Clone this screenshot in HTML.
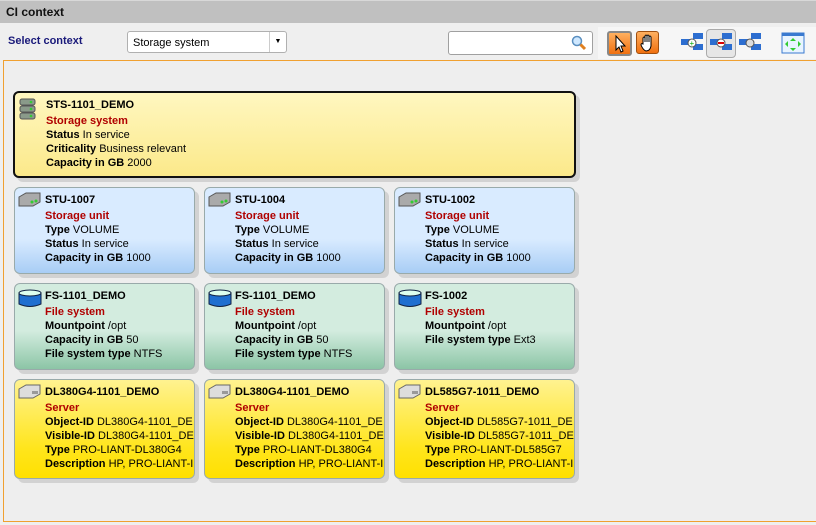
<!DOCTYPE html>
<html><head><style>
*{box-sizing:border-box;margin:0;padding:0}
body{width:816px;height:525px;background:#efefef;font-family:"Liberation Sans",Arial,sans-serif;font-size:11px;position:relative;overflow:hidden}
.title{position:absolute;left:0;top:0;width:816px;height:23px;background:#c0c0c0;border-top:1px solid #d8d8d8;font-weight:bold;font-size:12px;padding:4px 0 0 6px;color:#111}
.lbl{position:absolute;left:8px;top:35px;color:#1a1a7a;font-weight:bold;font-size:11px}
.sel{position:absolute;left:127px;top:31px;width:160px;height:22px;background:#fff;border:1px solid #b0b0b0;border-radius:3px;padding:5px 0 0 5px;font-size:11px}
.sel .ar{position:absolute;right:0;top:0;width:17px;height:20px;border-left:1px solid #ccc;font-size:7px;text-align:center;padding-top:6px}
.srch{position:absolute;left:448px;top:31px;width:145px;height:24px;background:#fff;border:1px solid #a0a0a0;border-radius:3px}
.tb{position:absolute;left:598px;top:27px;width:218px;height:32px;background:#f6f6f6}
.content{position:absolute;left:3px;top:60px;width:830px;height:462px;border:1px solid #f0a030;background:#eeeeee}
.card{position:absolute;border:1px solid #9aa;border-radius:6px;box-shadow:4px 4px 0 #d2d2d2;padding:5px 0 0 30px;line-height:14px;color:#000}
.card b{font-weight:bold}
.card .t{font-weight:bold;margin-bottom:2px}
.card .c{color:#b00000;font-weight:bold}
.card .ic{position:absolute;left:3px;top:4px}
.y1{background:linear-gradient(#fff7c0,#fbe98a);border:2px solid #111}
.bl{background:linear-gradient(#d9ebff 60%,#a8cdf5)}
.gr{background:linear-gradient(#d3ecdf 55%,#8cc5a6)}
.yl{background:linear-gradient(#fff290 0%,#ffe51c 70%,#ffe000)}
.w{white-space:nowrap;overflow:hidden}
</style></head><body>
<div class="title">CI context</div>
<div class="lbl">Select context</div>
<div class="sel">Storage system<div class="ar">▼</div></div>
<div class="srch"><svg style="position:absolute;right:5px;top:3px" width="16" height="16"><circle cx="6" cy="6" r="4.5" fill="#cfe8ff" stroke="#5a8fc0" stroke-width="1.5"/><line x1="9.5" y1="9.5" x2="14" y2="14" stroke="#e08020" stroke-width="3"/></svg></div>
<div class="tb">
<div style="position:absolute;left:9px;top:4px;width:25px;height:25px;border:2px solid #888;border-radius:3px;background:linear-gradient(#ffb060,#f07010)"><svg width="21" height="21"><path d="M7 3 L7 17 L10 14 L12 19 L14 18 L12 13 L16 13 Z" fill="#fff" stroke="#000"/></svg></div>
<div style="position:absolute;left:38px;top:4px;width:23px;height:23px;border:1px solid #a05010;border-radius:3px;background:linear-gradient(#ffb060,#f07010)"><svg width="21" height="21"><path d="M6 11 V6 Q7 4 8 6 V10 V4 Q9 2 10 4 V10 V4 Q11 2 12 4 V10 V5 Q13 3 14 5 V14 Q13 19 9 19 Q6 18 4 13 Q4 11 6 12Z" fill="#fff" stroke="#000"/></svg></div>
<svg style="position:absolute;left:83px;top:5px" width="24" height="20"><rect x="0" y="7" width="9" height="6" fill="#2d6ed0"/><rect x="12" y="1" width="10" height="6" fill="#2d6ed0"/><rect x="12" y="12" width="10" height="6" fill="#2d6ed0"/><circle cx="11" cy="11" r="4" fill="#fff" stroke="#555"/><text x="8.5" y="14" font-size="8" fill="#0a0">+</text></svg>
<div style="position:absolute;left:108px;top:2px;width:30px;height:29px;border:1px solid #aaa;border-radius:4px;background:#e6e6e6"></div>
<svg style="position:absolute;left:112px;top:5px" width="24" height="20"><rect x="0" y="7" width="9" height="6" fill="#2d6ed0"/><rect x="12" y="1" width="10" height="6" fill="#2d6ed0"/><rect x="12" y="12" width="10" height="6" fill="#2d6ed0"/><circle cx="11" cy="11" r="4" fill="#fff" stroke="#555"/><rect x="8" y="10" width="6" height="2" fill="#d00"/></svg>
<svg style="position:absolute;left:141px;top:5px" width="24" height="20"><rect x="0" y="7" width="9" height="6" fill="#2d6ed0"/><rect x="12" y="1" width="10" height="6" fill="#2d6ed0"/><rect x="12" y="12" width="10" height="6" fill="#2d6ed0"/><circle cx="11" cy="11" r="4" fill="#ddd" stroke="#555"/></svg>
<svg style="position:absolute;left:183px;top:5px" width="24" height="22"><rect x="1" y="1" width="22" height="20" fill="#e8f4ff" stroke="#3a7ad0"/><rect x="1" y="1" width="22" height="3" fill="#3a7ad0"/><path d="M12 6 L9 9 H15Z M12 19 L9 16 H15Z M4 12 L7 9 V15Z M20 12 L17 9 V15Z" fill="#3c3"/></svg>
</div>
<div class="content"></div>

<div class="card y1" style="left:13px;top:91px;width:563px;height:87px;padding:5px 0 0 31px">
<svg class="ic" width="20" height="24"><g fill="#8a9a8a" stroke="#555"><rect x="2" y="2" width="15" height="6" rx="2"/><rect x="2" y="9" width="15" height="6" rx="2"/><rect x="2" y="16" width="15" height="6" rx="2"/></g><g fill="#3c3"><circle cx="13" cy="5" r="1.3"/><circle cx="13" cy="12" r="1.3"/><circle cx="13" cy="19" r="1.3"/></g></svg>
<div class="t">STS-1101_DEMO</div><div class="c">Storage system</div><div><b>Status</b> In service</div><div><b>Criticality</b> Business relevant</div><div><b>Capacity in GB</b> 2000</div></div>

<!-- storage units -->
<div class="card bl" style="left:14px;top:187px;width:181px;height:87px"><svg class="ic" width="24" height="16"><path d="M1 5 L8 1 H22 V10 L15 14 H1Z" fill="#aaa" stroke="#555"/><circle cx="14" cy="10" r="1.5" fill="#3c3"/><circle cx="18" cy="9" r="1.5" fill="#3c3"/></svg><div class="t">STU-1007</div><div class="c">Storage unit</div><div><b>Type</b> VOLUME</div><div><b>Status</b> In service</div><div><b>Capacity in GB</b> 1000</div></div>
<div class="card bl" style="left:204px;top:187px;width:181px;height:87px"><svg class="ic" width="24" height="16"><path d="M1 5 L8 1 H22 V10 L15 14 H1Z" fill="#aaa" stroke="#555"/><circle cx="14" cy="10" r="1.5" fill="#3c3"/><circle cx="18" cy="9" r="1.5" fill="#3c3"/></svg><div class="t">STU-1004</div><div class="c">Storage unit</div><div><b>Type</b> VOLUME</div><div><b>Status</b> In service</div><div><b>Capacity in GB</b> 1000</div></div>
<div class="card bl" style="left:394px;top:187px;width:181px;height:87px"><svg class="ic" width="24" height="16"><path d="M1 5 L8 1 H22 V10 L15 14 H1Z" fill="#aaa" stroke="#555"/><circle cx="14" cy="10" r="1.5" fill="#3c3"/><circle cx="18" cy="9" r="1.5" fill="#3c3"/></svg><div class="t">STU-1002</div><div class="c">Storage unit</div><div><b>Type</b> VOLUME</div><div><b>Status</b> In service</div><div><b>Capacity in GB</b> 1000</div></div>

<!-- file systems -->
<div class="card gr" style="left:14px;top:283px;width:181px;height:87px"><svg class="ic" width="24" height="20"><path d="M1 5 Q12 9 23 5 V16 Q12 21 1 16Z" fill="#1e6fd0" stroke="#124"/><ellipse cx="12" cy="5" rx="11" ry="3" fill="#dfe" stroke="#124"/></svg><div class="t">FS-1101_DEMO</div><div class="c">File system</div><div><b>Mountpoint</b> /opt</div><div><b>Capacity in GB</b> 50</div><div><b>File system type</b> NTFS</div></div>
<div class="card gr" style="left:204px;top:283px;width:181px;height:87px"><svg class="ic" width="24" height="20"><path d="M1 5 Q12 9 23 5 V16 Q12 21 1 16Z" fill="#1e6fd0" stroke="#124"/><ellipse cx="12" cy="5" rx="11" ry="3" fill="#dfe" stroke="#124"/></svg><div class="t">FS-1101_DEMO</div><div class="c">File system</div><div><b>Mountpoint</b> /opt</div><div><b>Capacity in GB</b> 50</div><div><b>File system type</b> NTFS</div></div>
<div class="card gr" style="left:394px;top:283px;width:181px;height:87px"><svg class="ic" width="24" height="20"><path d="M1 5 Q12 9 23 5 V16 Q12 21 1 16Z" fill="#1e6fd0" stroke="#124"/><ellipse cx="12" cy="5" rx="11" ry="3" fill="#dfe" stroke="#124"/></svg><div class="t">FS-1002</div><div class="c">File system</div><div><b>Mountpoint</b> /opt</div><div><b>File system type</b> Ext3</div></div>

<!-- servers -->
<div class="card yl w" style="left:14px;top:379px;width:181px;height:100px"><svg class="ic" width="24" height="16"><path d="M1 5 L8 1 H22 V10 L15 14 H1Z" fill="#ddd" stroke="#666"/><rect x="14" y="7" width="6" height="3" fill="#999"/></svg><div class="t">DL380G4-1101_DEMO</div><div class="c">Server</div><div><b>Object-ID</b> DL380G4-1101_DE</div><div><b>Visible-ID</b> DL380G4-1101_DE</div><div><b>Type</b> PRO-LIANT-DL380G4</div><div><b>Description</b> HP, PRO-LIANT-I</div></div>
<div class="card yl w" style="left:204px;top:379px;width:181px;height:100px"><svg class="ic" width="24" height="16"><path d="M1 5 L8 1 H22 V10 L15 14 H1Z" fill="#ddd" stroke="#666"/><rect x="14" y="7" width="6" height="3" fill="#999"/></svg><div class="t">DL380G4-1101_DEMO</div><div class="c">Server</div><div><b>Object-ID</b> DL380G4-1101_DE</div><div><b>Visible-ID</b> DL380G4-1101_DE</div><div><b>Type</b> PRO-LIANT-DL380G4</div><div><b>Description</b> HP, PRO-LIANT-I</div></div>
<div class="card yl w" style="left:394px;top:379px;width:181px;height:100px"><svg class="ic" width="24" height="16"><path d="M1 5 L8 1 H22 V10 L15 14 H1Z" fill="#ddd" stroke="#666"/><rect x="14" y="7" width="6" height="3" fill="#999"/></svg><div class="t">DL585G7-1011_DEMO</div><div class="c">Server</div><div><b>Object-ID</b> DL585G7-1011_DE</div><div><b>Visible-ID</b> DL585G7-1011_DE</div><div><b>Type</b> PRO-LIANT-DL585G7</div><div><b>Description</b> HP, PRO-LIANT-I</div></div>
</body></html>
